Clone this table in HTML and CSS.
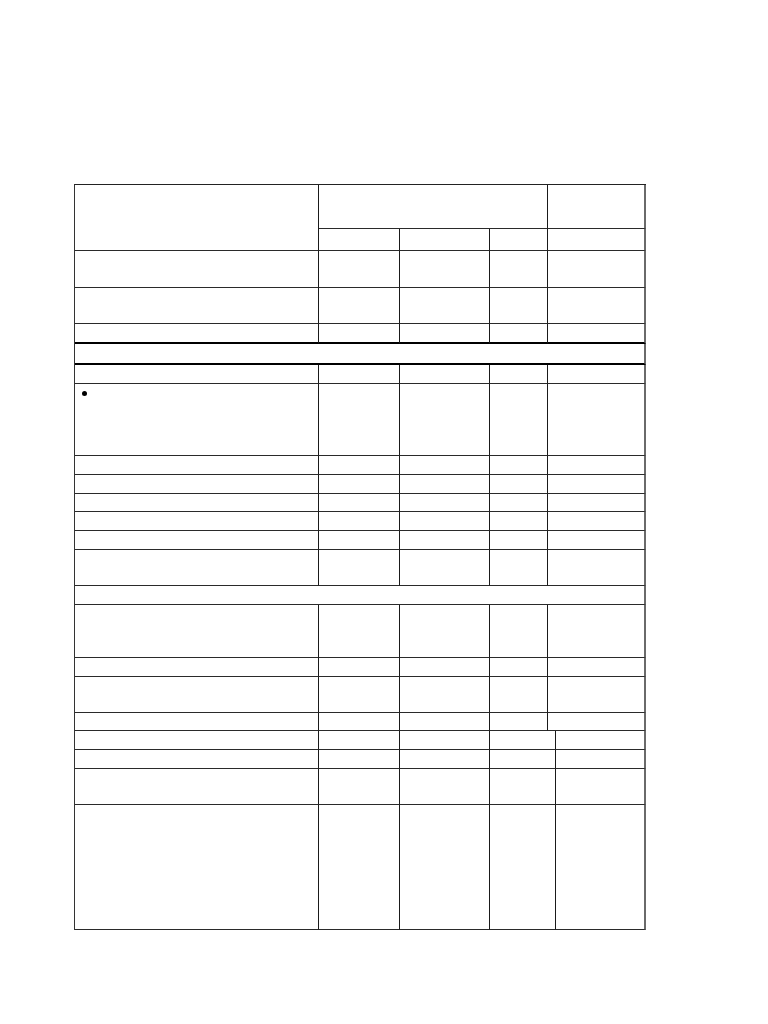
FILE: index.html
```html
<!DOCTYPE html>
<html>
<head>
<meta charset="utf-8">
<link rel="stylesheet" href="styles.css">
</head>
<body>
<div class="sheet">
  <div class="grid upper">
    <div class="c span2r"></div>
    <div class="c span3c"></div>
    <div class="c last"></div>
    <div class="c"></div><div class="c"></div><div class="c"></div><div class="c last"></div>

    <div class="c"></div><div class="c"></div><div class="c"></div><div class="c"></div><div class="c last"></div>
    <div class="c"></div><div class="c"></div><div class="c"></div><div class="c"></div><div class="c last"></div>
    <div class="c thick"></div><div class="c thick"></div><div class="c thick"></div><div class="c thick"></div><div class="c thick last"></div>
    <div class="c full thick last"></div>
    <div class="c"></div><div class="c"></div><div class="c"></div><div class="c"></div><div class="c last"></div>
    <div class="c"><span class="bullet"></span></div><div class="c"></div><div class="c"></div><div class="c"></div><div class="c last"></div>
    <div class="c"></div><div class="c"></div><div class="c"></div><div class="c"></div><div class="c last"></div>
    <div class="c"></div><div class="c"></div><div class="c"></div><div class="c"></div><div class="c last"></div>
    <div class="c"></div><div class="c"></div><div class="c"></div><div class="c"></div><div class="c last"></div>
    <div class="c"></div><div class="c"></div><div class="c"></div><div class="c"></div><div class="c last"></div>
    <div class="c"></div><div class="c"></div><div class="c"></div><div class="c"></div><div class="c last"></div>
    <div class="c"></div><div class="c"></div><div class="c"></div><div class="c"></div><div class="c last"></div>
    <div class="c full last"></div>
    <div class="c"></div><div class="c"></div><div class="c"></div><div class="c"></div><div class="c last"></div>
    <div class="c"></div><div class="c"></div><div class="c"></div><div class="c"></div><div class="c last"></div>
    <div class="c"></div><div class="c"></div><div class="c"></div><div class="c"></div><div class="c last"></div>
    <div class="c"></div><div class="c"></div><div class="c"></div><div class="c"></div><div class="c last"></div>
  </div>
  <div class="grid lower">
    <div class="c"></div><div class="c"></div><div class="c"></div><div class="c"></div><div class="c last"></div>
    <div class="c"></div><div class="c"></div><div class="c"></div><div class="c"></div><div class="c last"></div>
    <div class="c"></div><div class="c"></div><div class="c"></div><div class="c"></div><div class="c last"></div>
    <div class="c"></div><div class="c"></div><div class="c"></div><div class="c"></div><div class="c last"></div>
  </div>
</div>
</body>
</html>
```

FILE: styles.css
```css
html, body {
  margin: 0;
  padding: 0;
  background: #ffffff;
  font-family: "Liberation Sans", Arial, sans-serif;
}

.sheet {
  width: 571px;
  margin: 184px 0 0 74px;
  border-left: 1px solid #333333;
  border-top: 1px solid #222222;
}

.grid {
  display: grid;
}

.upper {
  grid-template-columns: 244px 81px 90px 58px 98px;
  grid-template-rows: 44px 22px 37px 36px 20px 21px 19px 72px 19px 19px 18px 19px 19px 36px 19px 53px 19px 36px 18px;
}

.lower {
  grid-template-columns: 244px 81px 90px 66px 90px;
  grid-template-rows: 19px 19px 36px 125px;
}

.c {
  box-sizing: border-box;
  border-right: 1px solid #1a1a1a;
  border-bottom: 1px solid #2a2a2a;
}

.c.last {
  border-right: 2px solid #6a6a6a;
}

.c.thick {
  border-bottom: 2px solid #000000;
}

.span2r {
  grid-row: span 2;
}

.span3c {
  grid-column: span 3;
}

.full {
  grid-column: 1 / -1;
}

.bullet {
  display: block;
  width: 5px;
  height: 5px;
  border-radius: 50%;
  background: #000000;
  margin: 7px 0 0 7px;
}
```
